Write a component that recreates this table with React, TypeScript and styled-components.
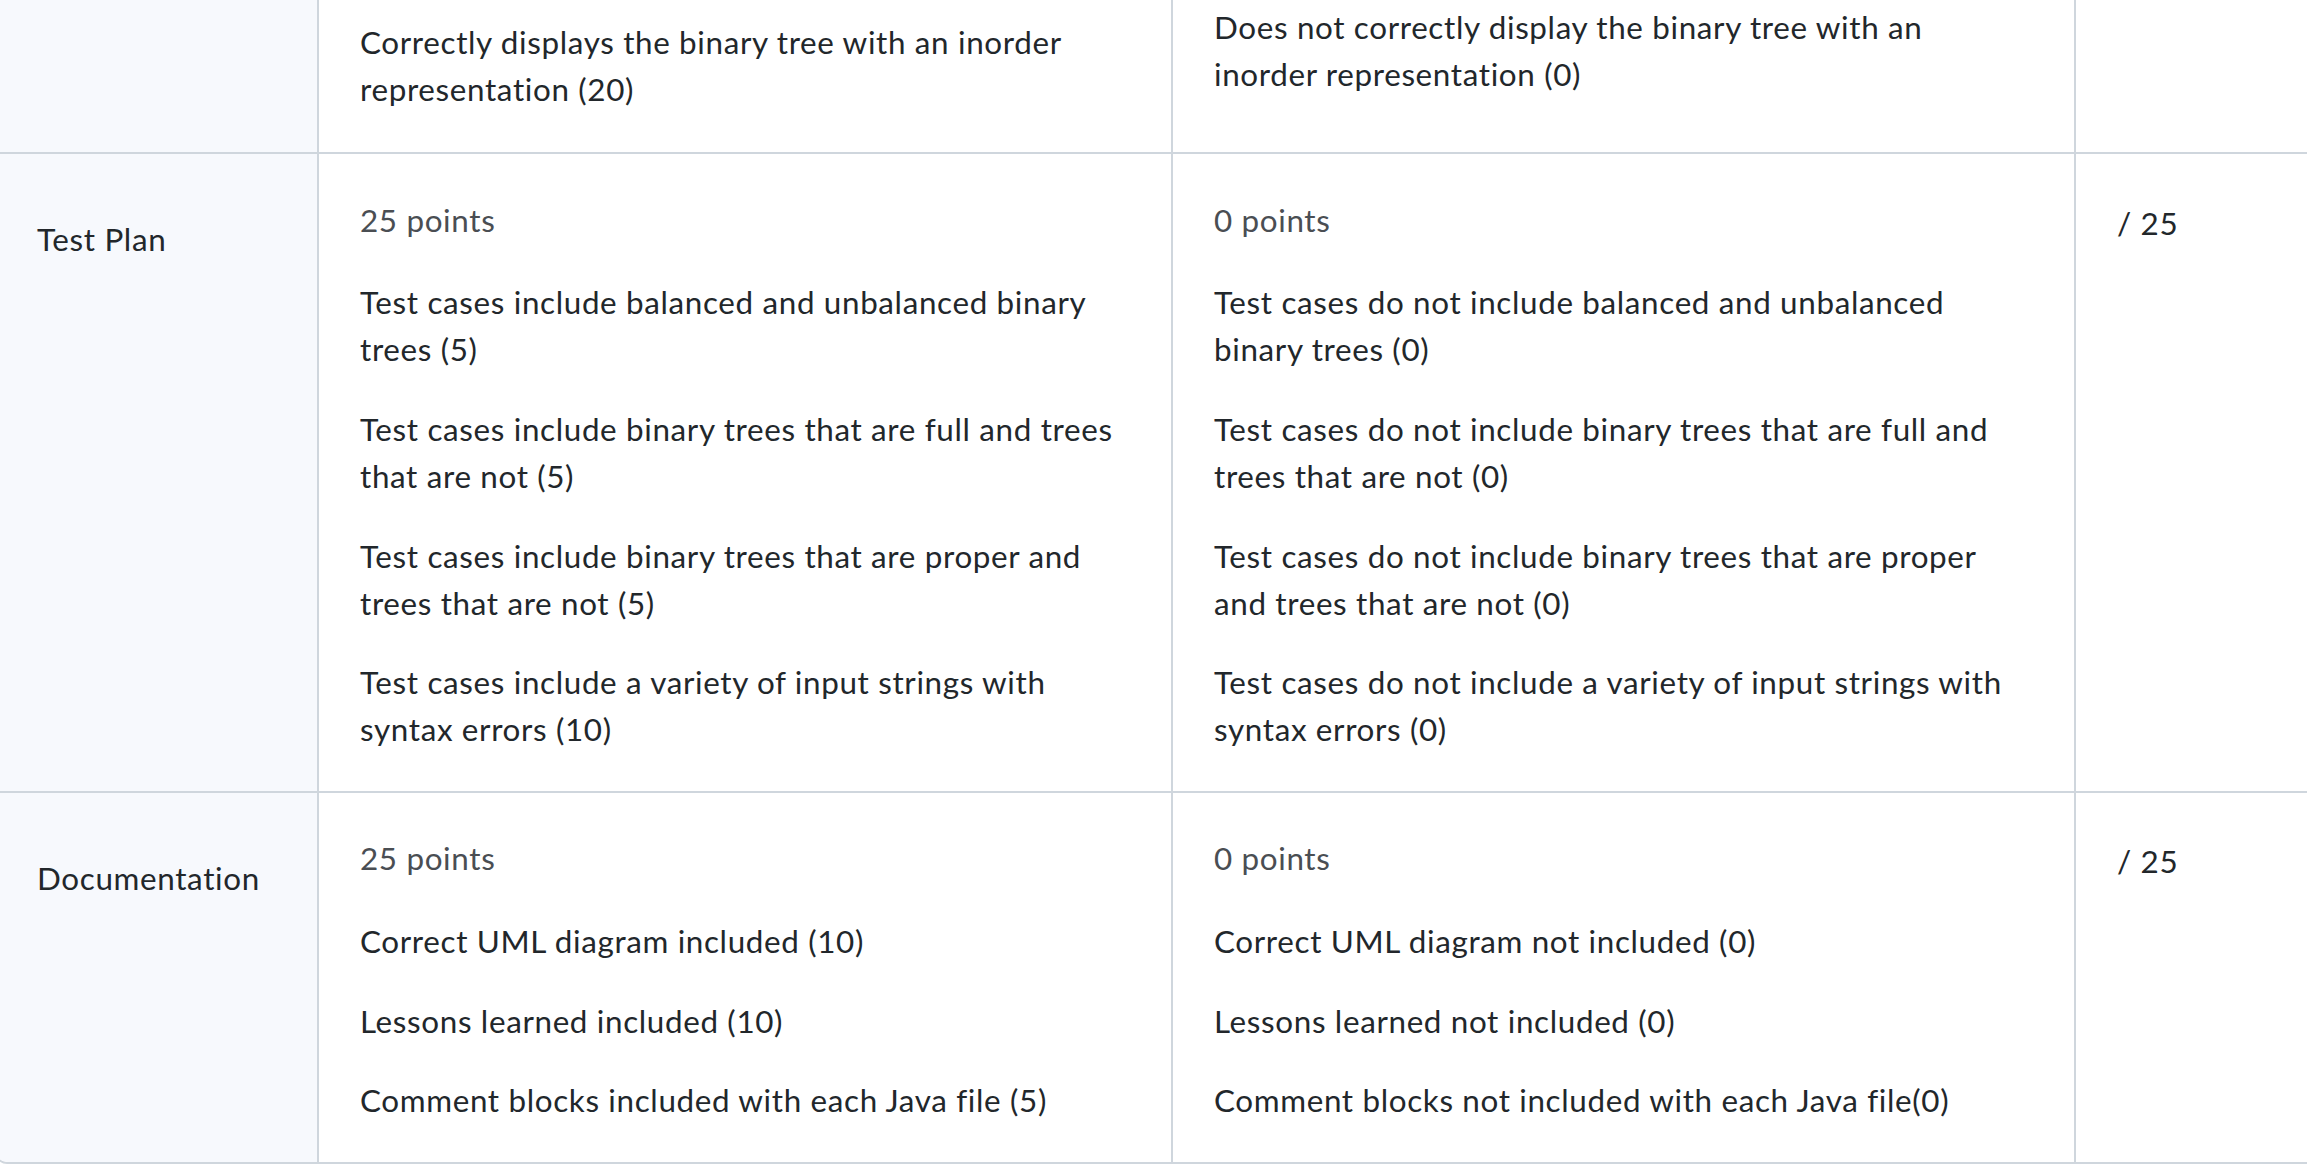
import React from "react";
import styled, { createGlobalStyle } from "styled-components";

const GlobalStyle = createGlobalStyle`
  html, body {
    margin: 0;
    padding: 0;
    background: #ffffff;
    overflow: hidden;
  }
  body {
    font-family: Lato, "Open Sans", "Liberation Sans", sans-serif;
    color: #22272b;
  }
  * { box-sizing: border-box; }
`;

const Rubric = styled.div`
  display: grid;
  grid-template-columns: 322px 854px 903px 1fr;
  width: 2400px;
  margin-left: -5px;
  border: 2px solid #cfd6dd;
  border-top: none;
  border-radius: 0 0 12px 12px;
  overflow: hidden;
`;

const Cell = styled.div<{ $top?: number; $bottom?: number; $last?: boolean; $end?: boolean }>`
  padding: ${(p) => p.$top ?? 44}px 41px ${(p) => p.$bottom ?? 37.5}px 41px;
  border-right: ${(p) => (p.$end ? "none" : "2px solid #cfd6dd")};
  border-bottom: ${(p) => (p.$last ? "none" : "2px solid #cfd6dd")};
  background: #ffffff;
  min-width: 0;
`;

const CriterionCell = styled(Cell)`
  background: #f7f9fd;
  padding-left: 40px;
`;

const Text = styled.div`
  font-size: 31.4px;
  line-height: 47.1px;
  letter-spacing: 0.65px;
  color: #22272b;
`;

const CriterionName = styled(Text)``;

const Points = styled(Text)`
  line-height: 41.2px;
  color: #4a4e53;
  margin-top: 1.5px;
  margin-bottom: 38.5px;
`;

const Descriptions = styled.div`
  display: flex;
  flex-direction: column;
  gap: 32.4px;
`;

const Description = styled(Text)``;

const Score = styled(Text)``;

type Rating = { points?: string; items: string[] };
type Row = {
  name?: string;
  ratings: Rating[];
  score?: string;
  tops?: number[];
};

const rows: Row[] = [
  {
    ratings: [
      { items: ["Correctly displays the binary tree with an inorder representation (20)"] },
      { items: ["Does not correctly display the binary tree with an inorder representation (0)"] },
    ],
    tops: [19, 4],
  },
  {
    name: "Test Plan",
    score: "/ 25",
    ratings: [
      {
        points: "25 points",
        items: [
          "Test cases include balanced and unbalanced binary trees (5)",
          "Test cases include binary trees that are full and trees that are not (5)",
          "Test cases include binary trees that are proper and trees that are not (5)",
          "Test cases include a variety of input strings with syntax errors (10)",
        ],
      },
      {
        points: "0 points",
        items: [
          "Test cases do not include balanced and unbalanced binary trees (0)",
          "Test cases do not include binary trees that are full and trees that are not (0)",
          "Test cases do not include binary trees that are proper and trees that are not (0)",
          "Test cases do not include a variety of input strings with syntax errors (0)",
        ],
      },
    ],
  },
  {
    name: "Documentation",
    score: "/ 25",
    ratings: [
      {
        points: "25 points",
        items: [
          "Correct UML diagram included (10)",
          "Lessons learned included (10)",
          "Comment blocks included with each Java file (5)",
        ],
      },
      {
        points: "0 points",
        items: [
          "Correct UML diagram not included (0)",
          "Lessons learned not included (0)",
          "Comment blocks not included with each Java file(0)",
        ],
      },
    ],
  },
];

export default function App() {
  return (
    <>
      <GlobalStyle />
      <Rubric>
        {rows.map((row, ri) => {
          const last = ri === rows.length - 1;
          const cut = !row.name;
          const bottom = cut ? 39 : 37.5;
          return (
            <React.Fragment key={ri}>
              <CriterionCell $last={last} $top={cut ? 19 : 62} $bottom={bottom}>
                {row.name && <CriterionName>{row.name}</CriterionName>}
              </CriterionCell>
              {row.ratings.map((r, i) => (
                <Cell
                  key={i}
                  $last={last}
                  $top={row.tops ? row.tops[i] : 44}
                  $bottom={bottom}
                >
                  {r.points && <Points>{r.points}</Points>}
                  <Descriptions>
                    {r.items.map((t, k) => (
                      <Description key={k}>{t}</Description>
                    ))}
                  </Descriptions>
                </Cell>
              ))}
              <Cell $last={last} $end $top={45.5} $bottom={bottom}>
                {row.score && <Score>{row.score}</Score>}
              </Cell>
            </React.Fragment>
          );
        })}
      </Rubric>
    </>
  );
}
